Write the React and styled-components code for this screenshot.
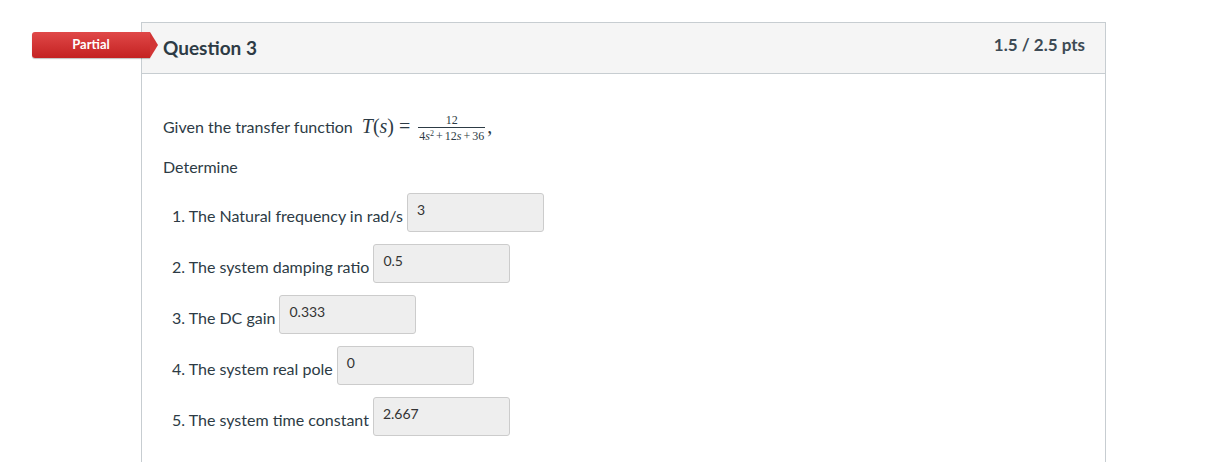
import styled, { createGlobalStyle } from "styled-components"

const GlobalStyle = createGlobalStyle`
  html, body {
    margin: 0;
    padding: 0;
    background: #fff;
    font-family: Lato, "Liberation Sans", sans-serif;
    color: #2d3b45;
  }
`

const Page = styled.div`
  padding: 22px 0 0 141px;
`

const Card = styled.div`
  position: relative;
  width: 963px;
  height: 460px;
  border: 1px solid #c7cdd1;
  border-bottom: none;
`

const Badge = styled.div`
  position: absolute;
  left: -110px;
  top: 9px;
  width: 118px;
  height: 26px;
  display: flex;
  align-items: center;
  justify-content: center;
  box-sizing: border-box;
  padding-bottom: 2px;
  border-radius: 3px 0 0 3px;
  background: linear-gradient(#e04848, #c42222);
  color: #fff;
  font-size: 13px;
  font-weight: 700;
  box-shadow: 0 1px 1px rgba(0, 0, 0, 0.25);

  &::after {
    content: "";
    position: absolute;
    right: -8px;
    top: 0;
    border-top: 13px solid transparent;
    border-bottom: 13px solid transparent;
    border-left: 8px solid #d23535;
  }
`

const Header = styled.div`
  display: flex;
  align-items: center;
  justify-content: space-between;
  height: 50px;
  padding: 0 20px 0 21px;
  background: #f5f5f5;
  border-bottom: 1px solid #c7cdd1;
`

const Title = styled.h2`
  margin: 0;
  margin-top: -2px;
  font-size: 19px;
  font-weight: 700;
`

const Points = styled.div`
  font-size: 17px;
  font-weight: 700;
  color: #3d4a54;
  margin-top: -8px;
`

const Body = styled.div`
  display: flex;
  flex-direction: column;
  padding: 41px 21px 0;
  font-size: 16px;
`

const Para = styled.p`
  margin: 0 0 ${(p) => p.$after || 0}px;
  height: 22px;
  line-height: 22px;
  white-space: nowrap;
`

const Math = styled.span`
  font-family: "Liberation Serif", "DejaVu Serif", serif;
  font-size: 20px;
  margin-left: ${(p) => (p.$tight ? "2px" : "9px")};
  & i {
    font-style: italic;
  }
`

const Eq = styled.span`
  margin: 0 8px 0 5px;
`

const Frac = styled.span`
  display: inline-flex;
  flex-direction: column;
  align-items: center;
  vertical-align: middle;
  line-height: 10px;
  font-family: "Liberation Serif", "DejaVu Serif", serif;
  font-size: 12px;
  position: relative;
  top: -1px;
  & i {
    font-style: italic;
  }
  & sup {
    font-size: 8px;
    line-height: 0;
    vertical-align: 4px;
  }
`

const Num = styled.span`
  align-self: stretch;
  text-align: center;
  padding-bottom: 2px;
  border-bottom: 1px solid #2d3b45;
`

const Den = styled.span`
  padding: 3px 1px 0;
`

const Op = styled.span`
  margin: 0 2px;
`

const List = styled.ol`
  margin: 15px 0 0;
  padding: 0 0 0 9px;
  list-style: none;
  display: flex;
  flex-direction: column;
  gap: 12px;
`

const Item = styled.li`
  display: flex;
  align-items: flex-end;
  gap: 4px;
  height: 39px;
`

const Label = styled.span`
  padding-bottom: 5px;
  line-height: 22px;
`

const Answer = styled.div`
  width: 135px;
  height: 37px;
  border: 1px solid #ccc;
  border-radius: 3px;
  background: #eeeeee;
  font-size: 14px;
  color: #333;
  & span {
    display: block;
    padding: 7px 0 0 9px;
  }
`

const answers = [
  ["1. The Natural frequency in rad/s", "3"],
  ["2. The system damping ratio", "0.5"],
  ["3. The DC gain", "0.333"],
  ["4. The system real pole", "0"],
  ["5. The system time constant", "2.667"],
]

export default function App() {
  return (
    <>
      <GlobalStyle />
      <Page>
        <Card>
          <Badge>Partial</Badge>
          <Header>
            <Title>Question 3</Title>
            <Points>1.5 / 2.5 pts</Points>
          </Header>
          <Body>
            <Para $after={19}>
              Given the transfer function
              <Math>
                <i>T</i>(<i>s</i>)<Eq>=</Eq>
              </Math>
              <Frac>
                <Num>12</Num>
                <Den>
                  4<i>s</i>
                  <sup>2</sup>
                  <Op>+</Op>12<i>s</i>
                  <Op>+</Op>36
                </Den>
              </Frac>
              <Math $tight>,</Math>
            </Para>
            <Para>Determine</Para>
            <List>
              {answers.map(([label, value]) => (
                <Item key={label}>
                  <Label>{label}</Label>
                  <Answer>
                    <span>{value}</span>
                  </Answer>
                </Item>
              ))}
            </List>
          </Body>
        </Card>
      </Page>
    </>
  )
}
